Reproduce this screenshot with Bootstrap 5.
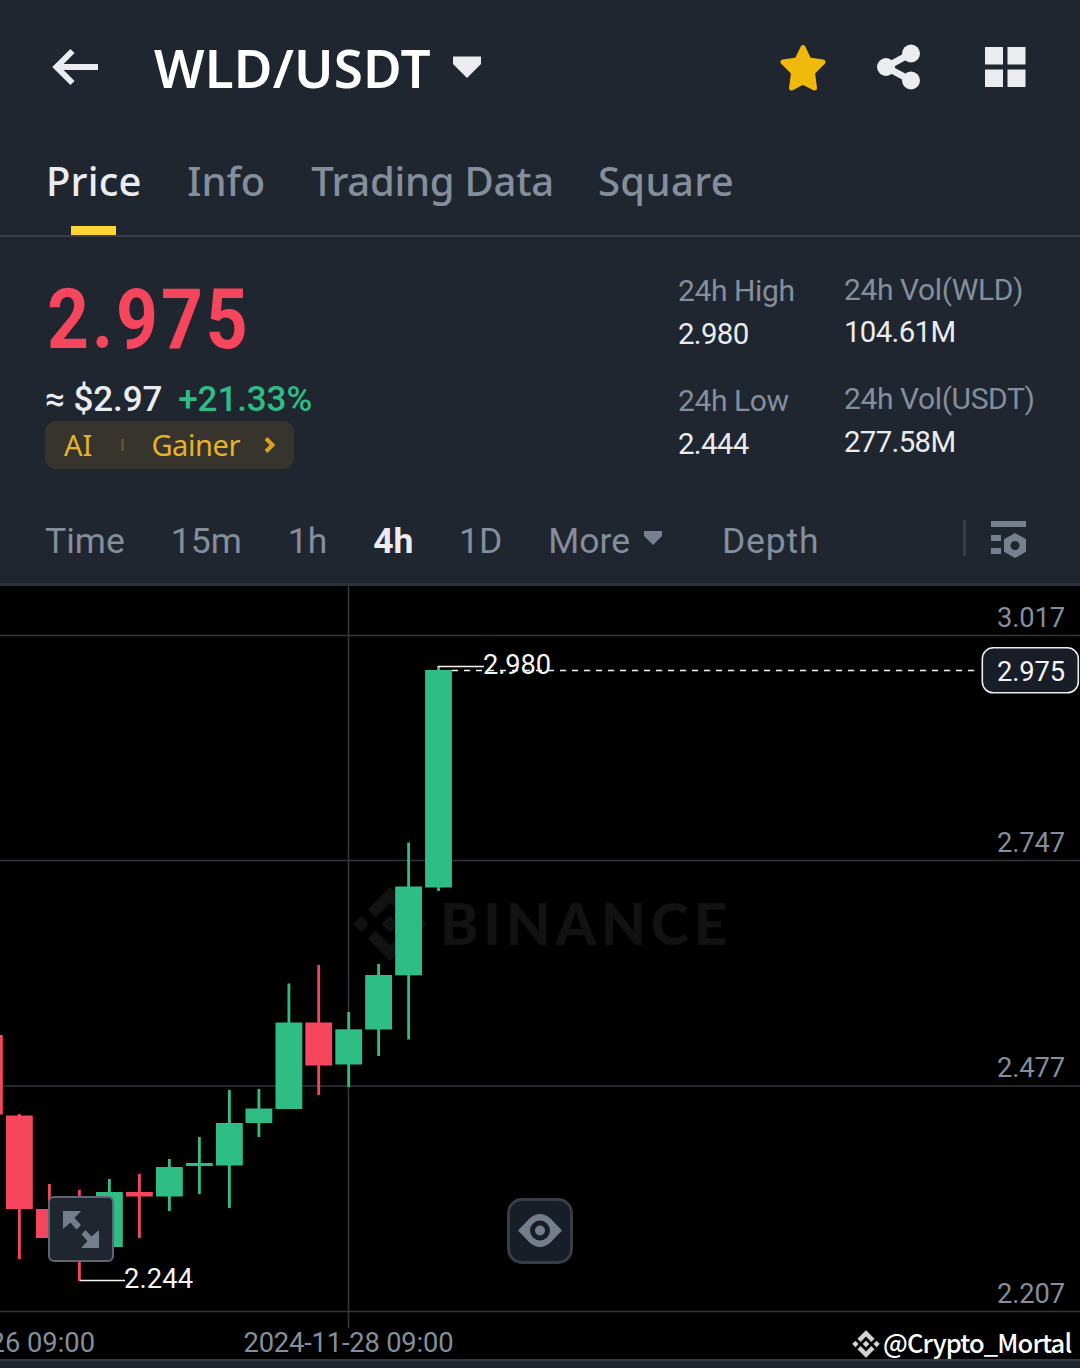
<!DOCTYPE html>
<html lang="en">
<head>
<meta charset="utf-8">
<meta name="viewport" content="width=device-width, initial-scale=1">
<title>WLD/USDT</title>
<link href="https://cdn.jsdelivr.net/npm/bootstrap@5.3.0/dist/css/bootstrap.min.css" rel="stylesheet">
<style>
  body { background: #1f2630; color: #eaecef; font-family: Roboto, "Noto Sans", sans-serif; width: 1080px; height: 1368px; overflow: hidden; }
  svg { display: block; flex: none; }
  .topbar { height: 136px; padding: 0 54px 2px 52px; }
  .pair { font: 600 53px/60px "Noto Sans", sans-serif; letter-spacing: .15px; color: #fff; margin: 1px 0 0 56px; }
  .pair-caret { margin-left: 22px; }
  .share-ico { margin: 0 64px 0 51px; }
  .tabs { height: 101px; padding-left: 46px; border-bottom: 2px solid #373d47; }
  .tabs .nav-link { font: 500 40px/60px "Noto Sans", sans-serif; color: #848e9c; padding: 15px 0 0; margin-right: 46px; white-space: nowrap; }
  .tabs .nav-link.active { color: #eaecef; letter-spacing: .2px; margin-right: 45.5px; position: relative; }
  .tabs .nav-link.active::after { content: ""; position: absolute; left: 25px; bottom: 0; width: 45px; height: 9px; background: #fcd535; }
  .tabs .wide { letter-spacing: -.25px; margin-right: 44px; }
  .tabs .nav-link:last-child { letter-spacing: .4px; }
  .ticker { height: 255px; padding-left: 45px; }
  .quote { width: 633px; }
  .last { font: 700 84px/84px Roboto, sans-serif; letter-spacing: 3.4px; color: #f6465d; margin: 41px 0 0 2px; transform: scaleX(.87); transform-origin: 0 0; }
  .fiat { font: 500 35px/44px Roboto, sans-serif; margin-top: 16px; margin-bottom: -1px; letter-spacing: -.1px; }
  .up { color: #2ebd85; margin-left: 16px; letter-spacing: -.1px; }
  .tagbox { width: 249px; height: 48px; border-radius: 11px; background: #36342c; color: #e6b32a; font: 400 29px/48px "Noto Sans", sans-serif; padding: 0 18px 0 19px; }
  .tagsep { width: 3px; height: 12px; background: #5f4f24; margin: 0 27px 0 29px; }
  .gainer { letter-spacing: -.4px; }
  .stats { padding-top: 33px; width: 166px; font: 400 30px/42.5px Roboto, sans-serif; white-space: nowrap; }
  .stats.vol { padding-top: 31.5px; }
  .stats dt { font-weight: 400; color: #848e9c; letter-spacing: -.4px; line-height: inherit; }
  .stats dd { font-size: 29.4px; letter-spacing: -.65px; margin: 0 0 25px; }
  .stats.vol dd { margin-bottom: 24.5px; }
  .frames { height: 94px; padding: 6px 54px 0 45px; border-bottom: 3px solid #2b3139; font: 400 35.5px/50px Roboto, sans-serif; color: #848e9c; gap: 46px; }
  .frames .on { color: #eaecef; font-weight: 700; letter-spacing: -.3px; }
  .depth { margin-left: 14px; letter-spacing: .8px; }
  .more-caret { margin: -6px 0 0 14px; }
  .vsep { width: 3px; height: 36px; background: #373d47; margin: -6px 25px 0 auto; }
  .set-ico { margin-top: -3px; }
  .chart { height: 773px; background: #000; }
  .chart text { font: 400 27.3px Roboto, sans-serif; }
  .chart .axis { fill: #848e9c; }
  .chart .val { fill: #f5f5f6; }
  .chart .mark-name { font: 900 58px Lato, Inter, sans-serif; fill: #121212; }
  .chart .author { font: 500 25.5px "Noto Sans CJK SC", "Noto Sans", sans-serif; fill: #fff; }
  .tool { position: absolute; padding: 0; display: flex; align-items: center; justify-content: center; width: 66px; height: 66px; }
  .tool-expand { left: 48px; top: 610px; border: 2px solid #5f6673; border-radius: 6px; background: #1f2630; }
  .tool-eye { left: 507px; top: 611.5px; border: 3px solid #373d49; border-radius: 15px; background: #181d27; }
  .dock { height: 9px; border-top: 2px solid #373a45; }
</style>
</head>
<body>
<header class="topbar d-flex align-items-center">
  <svg width="46" height="38" viewBox="0 0 46 38"><path d="M46 19H4M20.500 3 4.500 19l16 16" fill="none" stroke="#eaecef" stroke-width="6"/></svg>
  <div class="pair">WLD/USDT</div>
  <svg class="pair-caret" width="28" height="22" viewBox="0 0 28 22"><path d="M0 .5h28v7.500L14 22 0 8z" fill="#eaecef"/></svg>
  <svg class="ms-auto" width="46" height="48" viewBox="0 0 46 48"><path d="M23 4.500l6 12.500 14 2-10.500 10.500 2 15.500L23 39l-11.500 6 2-15.500L3 19l14-2z" fill="#f0b90b" stroke="#f0b90b" stroke-width="5" stroke-linejoin="round"/></svg>
  <svg class="share-ico" width="44" height="46" viewBox="0 0 44 46"><g fill="#eaecef"><circle cx="9" cy="23" r="9"/><circle cx="34" cy="9.500" r="9"/><circle cx="34" cy="36.500" r="9"/></g><path d="M34 9.500 9 23l25 13.500" fill="none" stroke="#eaecef" stroke-width="6.800"/></svg>
  <svg width="41" height="40" viewBox="0 0 41 40"><path d="M0 0h18v17.500H0zM22.500 0h18v17.500h-18zM0 22.500h18V40H0zM22.500 22.500h18V40h-18z" fill="#eaecef"/></svg>
</header>

<nav class="tabs nav flex-nowrap">
  <a class="nav-link active">Price</a>
  <a class="nav-link">Info</a>
  <a class="nav-link wide">Trading Data</a>
  <a class="nav-link">Square</a>
</nav>

<section class="ticker d-flex">
  <div class="quote">
    <div class="last">2.975</div>
    <div class="fiat d-flex"><span>≈ $2.97</span><span class="up">+21.33%</span></div>
    <div class="tagbox d-flex align-items-center">
      <span>AI</span><i class="tagsep"></i><span class="gainer">Gainer</span>
      <svg class="ms-auto" width="12" height="16" viewBox="0 0 12 16"><path d="M2 1.500 8.500 8 2 14.500" fill="none" stroke="#d9a11c" stroke-width="4"/></svg>
    </div>
  </div>
  <dl class="stats mb-0">
    <dt>24h High</dt><dd>2.980</dd>
    <dt>24h Low</dt><dd>2.444</dd>
  </dl>
  <dl class="stats vol mb-0">
    <dt>24h Vol(WLD)</dt><dd>104.61M</dd>
    <dt>24h Vol(USDT)</dt><dd>277.58M</dd>
  </dl>
</section>

<div class="frames d-flex align-items-center">
  <span>Time</span><span>15m</span><span>1h</span><span class="on">4h</span><span>1D</span>
  <span class="d-flex align-items-center">More<svg class="more-caret" width="18" height="14" viewBox="0 0 18 14"><path d="M0 0h18v5L9 14 0 5z" fill="#76808f"/></svg></span>
  <span class="depth">Depth</span>
  <div class="d-flex align-items-center ms-auto">
    <i class="vsep"></i>
    <svg class="set-ico" width="35" height="37" viewBox="0 0 35 37"><path d="M0 0h35v6H0zM0 14h10v6H0zM0 27h10v6H0z" fill="#76808f"/><path fill-rule="evenodd" d="M24 12l11 6.200v12.600L24 37l-11-6.200V18.200zM24 20a4.500 4.500 0 1 0 .01 0z" fill="#76808f"/></svg>
  </div>
</div>

<main class="chart position-relative">
  <svg width="1080" height="773" viewBox="0 586 1080 773">
    <path d="M0 635.500H1080M0 860.500H1080M0 1086H1080M0 1311.500H1080M348.500 586V1328" stroke="#32353e" stroke-width="1.600"/>
    <g fill="#121212" transform="translate(390 924)">
      <path id="logo" d="M0-37 22.500-14.500 14.500-6.500 0-21-14.500-6.500-22.500-14.500zM0 37 22.500 14.500 14.500 6.500 0 21-14.500 6.500-22.500 14.500zM-29-8-21 0-29 8-37 0zM29-8 37 0 29 8 21 0zM0-8.500 8.500 0 0 8.500-8.500 0z"/>
    </g>
    <text class="mark-name" x="440" y="945" textLength="287" lengthAdjust="spacing">BINANCE</text>
    <g id="candles"></g>
    <path d="M452 670.500H976" stroke="#f5f5f6" stroke-width="1.600" stroke-dasharray="6 6"/>
    <path d="M438 666.500H484M80 1280.500H125" stroke="#f5f5f6" stroke-width="1.600"/>
    <text class="val" x="483" y="673.500" textLength="68">2.980</text>
    <text class="val" x="124" y="1287.500" textLength="69">2.244</text>
    <text class="axis" x="997" y="627" textLength="68">3.017</text>
    <text class="axis" x="997" y="852" textLength="68">2.747</text>
    <text class="axis" x="997" y="1077" textLength="68">2.477</text>
    <text class="axis" x="997" y="1303" textLength="68">2.207</text>
    <rect x="982.300" y="647.800" width="96" height="45" rx="11" fill="#181d27" stroke="#eaecef" stroke-width="1.600"/>
    <text class="val" x="997" y="681" textLength="68">2.975</text>
    <text class="axis" x="95" y="1351.500" text-anchor="end">26 09:00</text>
    <text class="axis" x="243.500" y="1351.500" textLength="210">2024-11-28 09:00</text>
    <use href="#logo" transform="translate(866 1344) scale(.365)" fill="#d5d5d5" stroke="#d5d5d5" stroke-width="1.500"/>
    <text class="author" x="883" y="1353" textLength="189">@Crypto_Mortal</text>
  </svg>
  <button class="tool tool-expand" type="button" aria-label="Expand">
    <svg width="36" height="37" viewBox="0 0 36 37"><path d="M0 0h18l-6.500 7 6.500 7-4.500 4.500-6-7L0 18zM36 37H18l6.500-7-6-6.500 4-4.500 6 6.500L36 19z" fill="#747d8c"/></svg>
  </button>
  <button class="tool tool-eye" type="button" aria-label="Show">
    <svg width="44" height="33" viewBox="0 0 44 33"><path d="M0 16.500 11 5Q22-5 33 5L44 16.500 33 28Q22 38 11 28z" fill="#747d8c"/><circle cx="22" cy="16.500" r="7.500" fill="none" stroke="#181d27" stroke-width="5"/></svg>
  </button>
</main>
<div class="dock"></div>

<script>
  // One candle per row: left edge, wick top, body top, body bottom, wick bottom, rising
  const candles = [
    [-24, 1035, 1035, 1114.5, 1114.5, 0],
    [6, 1114, 1115.5, 1209, 1259, 0],
    [36, 1184, 1209, 1238, 1238, 0],
    [66, 1190, 1215, 1240, 1281, 0],
    [96, 1179, 1192, 1247, 1247, 1],
    [126, 1174, 1192, 1196.5, 1238, 0],
    [156, 1159, 1167, 1196.5, 1211, 1],
    [186, 1137, 1163, 1166, 1194, 1],
    [216, 1090, 1123, 1165.5, 1208, 1],
    [245.5, 1089, 1108.5, 1123, 1137, 1],
    [275.5, 983.5, 1022.5, 1109, 1109, 1],
    [305.3, 965, 1022.5, 1065.5, 1095, 0],
    [335.3, 1012, 1029.3, 1064.5, 1087, 1],
    [365.2, 964, 975, 1029.5, 1056, 1],
    [395.2, 842.5, 886.5, 975.3, 1039.5, 1],
    [425.1, 666, 670, 887.5, 891, 1]
  ];
  document.getElementById('candles').innerHTML = candles.map(([x, hi, top, bottom, lo, up]) =>
    `<g fill="${up ? '#2ebd85' : '#f6465d'}"><rect x="${x}" y="${top}" width="26.800" height="${bottom - top}"/><rect x="${x + 12}" y="${hi}" width="2.800" height="${lo - hi}"/></g>`).join('');
</script>
<script src="https://cdn.jsdelivr.net/npm/bootstrap@5.3.0/dist/js/bootstrap.bundle.min.js"></script>
</body>
</html>
